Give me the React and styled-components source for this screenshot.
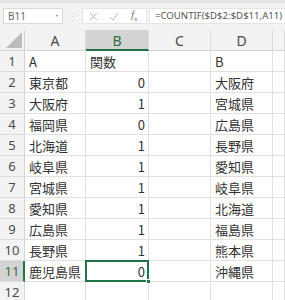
import React from 'react';
import styled, { createGlobalStyle } from 'styled-components';

const GlobalStyle = createGlobalStyle`
  html, body {
    margin: 0;
    padding: 0;
    background: #ffffff;
  }
  body {
    width: 285px;
    height: 300px;
    overflow: hidden;
    font-family: "Noto Sans CJK JP", "Noto Sans", sans-serif;
  }
`;

const colA = ['A', '東京都', '大阪府', '福岡県', '北海道', '岐阜県', '宮城県', '愛知県', '広島県', '長野県', '鹿児島県', ''];
const colB = ['関数', '0', '1', '0', '1', '1', '1', '1', '1', '1', '0', ''];
const colD = ['B', '大阪府', '宮城県', '広島県', '長野県', '愛知県', '岐阜県', '北海道', '福島県', '熊本県', '沖縄県', ''];
const columns = ['A', 'B', 'C', 'D', ''];

const App = () => {
    return (
        <>
            <GlobalStyle />
            <Window>
                <Toolbar>
                    <NameBox>
                        <span>B11</span>
                        <Caret />
                    </NameBox>
                    <Grip>⋮</Grip>
                    <FormulaButtons>
                        <svg width="9" height="9" viewBox="0 0 9 9">
                            <path d="M1 1 L8 8 M8 1 L1 8" stroke="#b8b8b8" strokeWidth="1" />
                        </svg>
                        <svg width="10" height="9" viewBox="0 0 10 9">
                            <path d="M1 5 L4 8 L9 1" stroke="#b8b8b8" strokeWidth="1" fill="none" />
                        </svg>
                        <Fx><i>f</i><sub>x</sub></Fx>
                    </FormulaButtons>
                    <FormulaInput>=COUNTIF($D$2:$D$11,A11)</FormulaInput>
                </Toolbar>

                <Sheet>
                    <Corner>
                        <svg width="18" height="18" viewBox="0 0 18 18">
                            <polygon points="17,1 17,17 1,17" fill="#bcbcbc" />
                        </svg>
                    </Corner>
                    {columns.map((c) => (
                        <ColHeader key={c || 'E'} $active={c === 'B'}>{c}</ColHeader>
                    ))}

                    {colA.map((a, i) => {
                        const row = i + 1;
                        const selected = row === 11;
                        return (
                            <React.Fragment key={row}>
                                <RowHeader $active={selected}>{row}</RowHeader>
                                <Cell>{a}</Cell>
                                <Cell $align={row === 1 ? 'left' : 'right'} $selected={selected}>
                                    {colB[i]}
                                    {selected && <FillHandle />}
                                </Cell>
                                <Cell />
                                <Cell>{colD[i]}</Cell>
                                <Cell />
                            </React.Fragment>
                        );
                    })}
                </Sheet>
            </Window>
        </>
    );
};

export default App;

const Window = styled.div`
  width: 285px;
  height: 300px;
  overflow: hidden;
  background: #ffffff;
`;

const Toolbar = styled.div`
  height: 30px;
  box-sizing: border-box;
  display: flex;
  align-items: flex-start;
  background: #f3f3f3;
  border-top: 3px solid #e4e4e4;
  padding-top: 5px;
`;

const NameBox = styled.div`
  margin-left: 3px;
  width: 60px;
  height: 16px;
  box-sizing: border-box;
  background: #ffffff;
  border: 1px solid #d9d9d9;
  display: flex;
  align-items: center;
  justify-content: space-between;
  padding: 0 4px 0 4px;
  font-family: "Noto Sans", sans-serif;
  font-size: 10px;
  color: #666666;
`;

const Caret = styled.span`
  width: 0;
  height: 0;
  border-left: 1.5px solid transparent;
  border-right: 1.5px solid transparent;
  border-top: 2px solid #888888;
`;

const Grip = styled.div`
  width: 19px;
  height: 16px;
  line-height: 16px;
  text-align: center;
  font-size: 11px;
  color: #cccccc;
`;

const FormulaButtons = styled.div`
  width: 65px;
  height: 16px;
  box-sizing: border-box;
  background: #ffffff;
  border: 1px solid #e4e4e4;
  display: flex;
  align-items: center;
  gap: 11px;
  padding: 0 0 0 6px;
`;

const Fx = styled.span`
  font-family: "Liberation Serif", serif;
  font-size: 11px;
  color: #777777;
  line-height: 1;
  margin-left: 1px;

  sub {
    font-size: 7px;
  }
`;

const FormulaInput = styled.div`
  flex: 1;
  margin-left: 2px;
  height: 16px;
  box-sizing: border-box;
  background: #ffffff;
  border: 1px solid #e4e4e4;
  border-right: none;
  padding-left: 5px;
  line-height: 14px;
  font-family: "Noto Sans", sans-serif;
  font-size: 9.6px;
  color: #555555;
  white-space: nowrap;
`;

const Sheet = styled.div`
  display: grid;
  grid-template-columns: 25px 61px 63px 62px 62px 1fr;
  grid-auto-rows: 21px;
`;

const Corner = styled.div`
  background: #f3f3f3;
  border-right: 1px solid #d4d4d4;
  border-bottom: 1px solid #d4d4d4;
  display: flex;
  align-items: flex-end;
  justify-content: flex-end;
  padding: 0 1px 1px 0;
`;

const ColHeader = styled.div`
  box-sizing: border-box;
  background: ${(p) => (p.$active ? '#d3d3d3' : '#f3f3f3')};
  border-right: 1px solid #dcdcdc;
  border-bottom: ${(p) => (p.$active ? '2px solid #217346' : '1px solid #d4d4d4')};
  color: ${(p) => (p.$active ? '#2f6f4a' : '#4a4a4a')};
  font-family: "Noto Sans", sans-serif;
  font-size: 14px;
  display: flex;
  align-items: center;
  justify-content: center;
  padding-top: ${(p) => (p.$active ? '1px' : '0')};
`;

const RowHeader = styled.div`
  box-sizing: border-box;
  background: ${(p) => (p.$active ? '#d3d3d3' : '#f3f3f3')};
  border-right: ${(p) => (p.$active ? '2px solid #217346' : '1px solid #d4d4d4')};
  border-bottom: 1px solid #dcdcdc;
  color: ${(p) => (p.$active ? '#2f6f4a' : '#4a4a4a')};
  font-family: "Noto Sans", sans-serif;
  font-size: 13px;
  display: flex;
  align-items: center;
  justify-content: center;
  padding-left: ${(p) => (p.$active ? '1px' : '0')};
`;

const Cell = styled.div`
  position: relative;
  box-sizing: border-box;
  border-right: 1px solid #e1e1e1;
  border-bottom: 1px solid #e1e1e1;
  padding: 1px 3px 0 4px;
  display: flex;
  align-items: center;
  justify-content: ${(p) => (p.$align === 'right' ? 'flex-end' : 'flex-start')};
  font-family: "Noto Sans CJK JP", sans-serif;
  font-size: 13px;
  color: #333333;
  white-space: nowrap;

  ${(p) =>
    p.$selected &&
    `
    &::after {
      content: '';
      position: absolute;
      left: -1px;
      top: -1px;
      right: -1px;
      bottom: -1px;
      border: 2px solid #217346;
      pointer-events: none;
    }
  `}
`;

const FillHandle = styled.span`
  position: absolute;
  right: -3px;
  bottom: -3px;
  width: 5px;
  height: 5px;
  background: #217346;
  border: 1px solid #ffffff;
  box-sizing: border-box;
  z-index: 1;
`;
